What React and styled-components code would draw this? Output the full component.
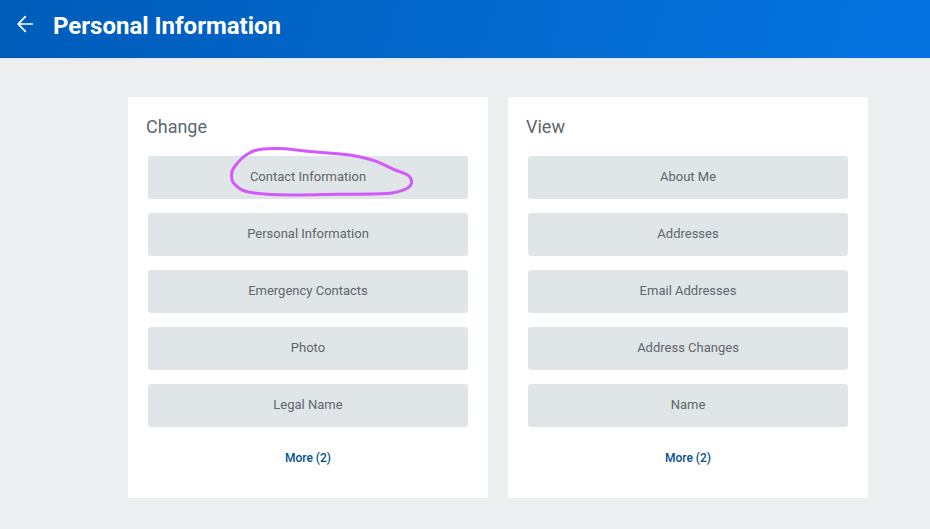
import React from 'react'
import styled, { createGlobalStyle } from 'styled-components'

const GlobalStyle = createGlobalStyle`
  * {
    box-sizing: border-box;
  }
  body {
    margin: 0;
    background: #edeef0;
    font-family: Roboto, "Liberation Sans", sans-serif;
  }
`

const Header = styled.header`
  display: flex;
  align-items: center;
  gap: 20px;
  height: 58px;
  padding: 0 16px 6px;
  background: linear-gradient(105deg, #005cb9, #0574e1);
  box-shadow: 0 1px 0 #e0e3e7;
`

const BackButton = styled.button`
  display: flex;
  padding: 0 0 4px;
  border: 0;
  background: none;
  color: #fff;
  cursor: pointer;
`

const Title = styled.h1`
  margin: 0;
  color: #fff;
  font-size: 24px;
  font-weight: 700;
  line-height: 28px;
`

const Main = styled.main`
  display: flex;
  flex-wrap: wrap;
  justify-content: center;
  gap: 20px;
  padding: 39px 0 31px 66px;
`

const Card = styled.section`
  width: 360px;
  padding: 20px 20px 30px;
  border-radius: 1px;
  background: #fff;
`

const CardTitle = styled.h2`
  margin: 0 -2px 19px;
  color: #5e666b;
  font-size: 18px;
  font-weight: 400;
  line-height: 20px;
`

const List = styled.ul`
  display: flex;
  flex-direction: column;
  gap: 14px;
  margin: 0;
  padding: 0;
  list-style: none;
`

const Item = styled.li`
  position: relative;
`

const TaskButton = styled.button`
  display: block;
  width: 100%;
  height: 43px;
  padding: 0 0 2px;
  border: 0;
  border-radius: 3px;
  background: #e0e5e8;
  color: #5f666b;
  font-family: inherit;
  font-size: 13px;
  cursor: pointer;
`

const More = styled.button`
  display: block;
  margin: 21px auto 0;
  padding: 0;
  border: 0;
  background: none;
  color: #00528c;
  font-family: inherit;
  font-size: 12px;
  font-weight: 500;
  line-height: 20px;
  cursor: pointer;
`

// hand-drawn loop around the highlighted item
const Loop = styled.svg`
  position: absolute;
  top: -11px;
  left: 50%;
  margin-left: -80px;
  pointer-events: none;
`

const groups = [
  {
    title: 'Change',
    items: ['Contact Information', 'Personal Information', 'Emergency Contacts', 'Photo', 'Legal Name'],
    marked: 'Contact Information',
  },
  {
    title: 'View',
    items: ['About Me', 'Addresses', 'Email Addresses', 'Address Changes', 'Name'],
  },
]

const TaskCard = ({ title, items, marked }) => (
  <Card>
    <CardTitle>{title}</CardTitle>
    <List>
      {items.map((item) => (
        <Item key={item}>
          <TaskButton type="button">{item}</TaskButton>
          {item === marked && (
            <Loop width="188" height="54" viewBox="0 0 188 54" fill="none" aria-hidden="true">
              <path
                d="M3.5 30C3.5 26 5 23.5 7 21C11 16 15 11.5 20 8.7C25 5.7 30 4.3 35 3.9C41 3.3 47 3.3 52 3.5C62 4 75 5.8 88.5 7C102 8.3 116 8.8 128.7 11.2C136 12.6 143 14.4 149 16.7C156 19.4 161 22.5 167 25C171 26.7 175 27.3 178.7 29.5C182 31.5 183.7 34 183.7 36.7C183.7 40 181 42.6 177 44.3C171.5 46.7 165 48 158.7 48.5C143 49.5 125 49 108.7 49.3C93 49.6 77 50.3 62 50C49 49.8 37 49.3 25.3 47.8C20 47.2 15.5 46.2 12 43.8C8.5 41.5 6 39.5 4.7 36.7C3.7 34.5 3.5 32 3.5 30Z"
                stroke="#d458fb"
                strokeWidth="3"
                strokeLinejoin="round"
              />
            </Loop>
          )}
        </Item>
      ))}
    </List>
    <More type="button">More (2)</More>
  </Card>
)

const App = () => {
  return (
    <>
      <GlobalStyle />
      <Header>
        <BackButton type="button" aria-label="Back">
          <svg width="17" height="18" viewBox="0 0 17 18" fill="none" stroke="currentColor" strokeWidth="1.7">
            <path d="M9.8 1.2L2.2 9L9.8 16.8M2.2 9H17" />
          </svg>
        </BackButton>
        <Title>Personal Information</Title>
      </Header>
      <Main>
        {groups.map((group) => (
          <TaskCard key={group.title} {...group} />
        ))}
      </Main>
    </>
  )
}

export default App
